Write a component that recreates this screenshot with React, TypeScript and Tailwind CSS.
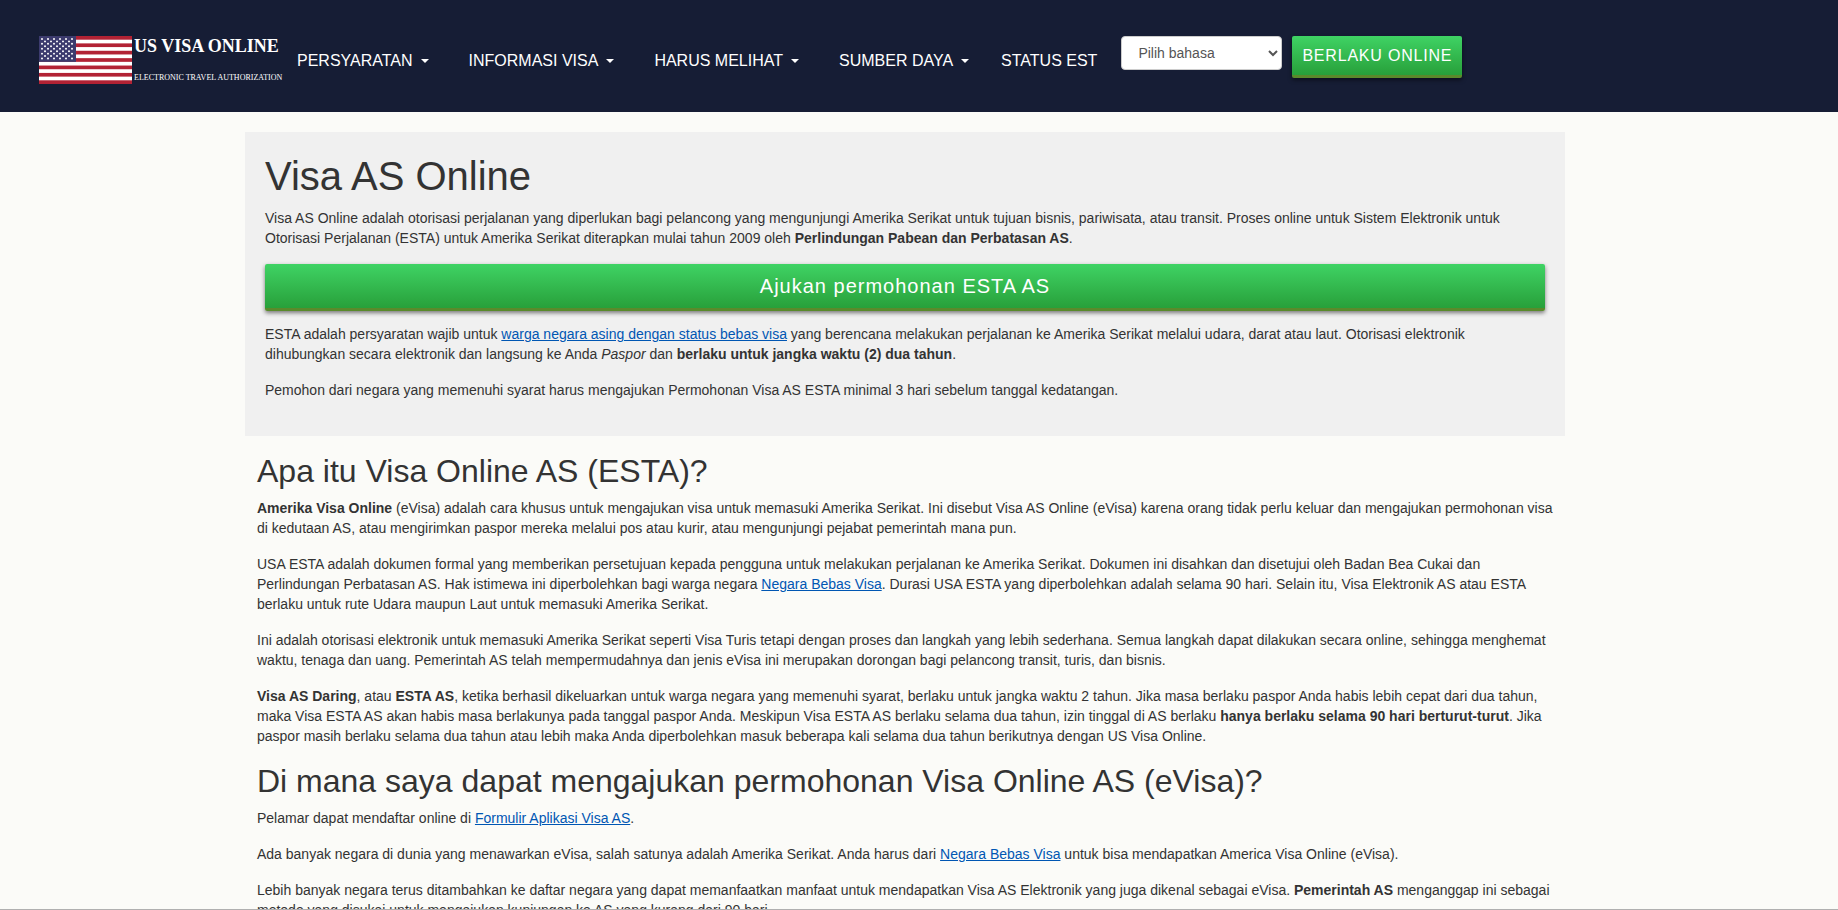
import type { ReactNode } from 'react';

const STRIPES = [0, 2, 4, 6, 8, 10, 12];

const STARS = Array.from({ length: 9 }).flatMap((_, row) =>
  Array.from({ length: row % 2 === 0 ? 6 : 5 }).map((_, col) => ({
    x: 3 + col * 6 + (row % 2 === 0 ? 0 : 3),
    y: 3 + row * 2.5,
  })),
);

const Flag = () => (
  <svg
    className="h-12 w-[93px] shrink-0"
    viewBox="0 0 93 49"
    preserveAspectRatio="none"
    aria-hidden="true"
  >
    <rect width="93" height="49" fill="#fff" />
    {STRIPES.map((i) => (
      <rect key={i} y={(i * 49) / 13} width="93" height={49 / 13} fill="#b22234" />
    ))}
    <rect width="37" height={(49 * 7) / 13} fill="#3c3b6e" />
    {STARS.map(({ x, y }) => (
      <circle key={`${x}-${y}`} cx={x} cy={y} r="1" fill="#fff" />
    ))}
  </svg>
);

const Logo = () => (
  <a href="#" className="flex w-[246px] shrink-0 items-start gap-0.5 text-white">
    <Flag />
    <span className="flex flex-col gap-4 whitespace-nowrap font-['Liberation_Serif',serif]">
      <span className="text-lg/5 font-bold">US VISA ONLINE</span>
      <span className="text-[8px]/3">ELECTRONIC TRAVEL AUTHORIZATION</span>
    </span>
  </a>
);

interface NavMenuProps {
  label: string;
}

const NavMenu = ({ label }: NavMenuProps) => (
  <button type="button" className="flex items-center gap-2 whitespace-nowrap">
    {label}
    <span className="border-x-4 border-t-4 border-x-transparent border-t-white" />
  </button>
);

const MENUS = ['PERSYARATAN', 'INFORMASI VISA', 'HARUS MELIHAT', 'SUMBER DAYA'];

const Header = () => (
  <header className="flex h-28 shrink-0 items-start bg-[#161d35] pt-9 pl-[39px]">
    <Logo />
    <nav className="mt-[13px] ml-3 flex items-center gap-8 text-base text-white">
      <div className="flex items-center gap-10">
        {MENUS.map((label) => (
          <NavMenu key={label} label={label} />
        ))}
      </div>
      <a href="#" className="whitespace-nowrap">
        STATUS EST
      </a>
    </nav>
    <select
      aria-label="Pilih bahasa"
      className="ml-6 h-[34px] w-[161px] rounded border border-[#ccc] bg-white px-3 text-sm text-[#555]"
    >
      <option>Pilih bahasa</option>
    </select>
    <a
      href="#"
      className="ml-2.5 whitespace-nowrap rounded-xs border-b-3 border-[#5a8a2b] bg-linear-to-b from-[#3fd364] to-[#28a03a] px-2.5 pt-2 pb-[7px] text-base tracking-wider text-white shadow-[0_2px_4px_rgba(0,0,0,0.5)]"
    >
      BERLAKU ONLINE
    </a>
  </header>
);

interface ChildrenProps {
  children: ReactNode;
}

const P = ({ children }: ChildrenProps) => (
  <p className="mb-4 text-sm/5">{children}</p>
);

const H2 = ({ children }: ChildrenProps) => (
  <h2 className="mb-2 text-[32px]/[38px]">{children}</h2>
);

const TextLink = ({ children }: ChildrenProps) => (
  <a href="#" className="text-[#0056b3] underline">
    {children}
  </a>
);

const Hero = () => (
  <section className="bg-[#f0f0f0] p-5">
    <h1 className="mb-2 text-[40px]/12">Visa AS Online</h1>
    <P>
      Visa AS Online adalah otorisasi perjalanan yang diperlukan bagi pelancong
      yang mengunjungi Amerika Serikat untuk tujuan bisnis, pariwisata, atau
      transit. Proses online untuk Sistem Elektronik untuk Otorisasi Perjalanan
      (ESTA) untuk Amerika Serikat diterapkan mulai tahun 2009 oleh{' '}
      <b>Perlindungan Pabean dan Perbatasan AS</b>.
    </P>
    <a
      href="#"
      className="mb-[13px] block rounded-xs border-b-3 border-[#5a8a2b] bg-linear-to-b from-[#3fd364] to-[#28a03a] pt-2 pb-2 text-center text-xl tracking-wider text-white shadow-[0_2px_4px_rgba(0,0,0,0.5)]"
    >
      Ajukan permohonan ESTA AS
    </a>
    <P>
      ESTA adalah persyaratan wajib untuk{' '}
      <TextLink>warga negara asing dengan status bebas visa</TextLink> yang
      berencana melakukan perjalanan ke Amerika Serikat melalui udara, darat
      atau laut. Otorisasi elektronik dihubungkan secara elektronik dan langsung
      ke Anda <i>Paspor</i> dan <b>berlaku untuk jangka waktu (2) dua tahun</b>.
    </P>
    <P>
      Pemohon dari negara yang memenuhi syarat harus mengajukan Permohonan Visa
      AS ESTA minimal 3 hari sebelum tanggal kedatangan.
    </P>
  </section>
);

export default function App() {
  return (
    <div className="flex h-screen flex-col overflow-hidden border-b border-[#b0b0b0] bg-[#fbfbf8] font-['Liberation_Sans',Arial,sans-serif] text-[#333]">
      <Header />
      <div className="min-h-0 flex-1 overflow-hidden pt-5 pr-7">
        <main className="mx-auto max-w-[1320px]">
          <Hero />
          <div className="px-3 pt-4">
            <H2>Apa itu Visa Online AS (ESTA)?</H2>
            <P>
              <b>Amerika Visa Online</b> (eVisa) adalah cara khusus untuk
              mengajukan visa untuk memasuki Amerika Serikat. Ini disebut Visa
              AS Online (eVisa) karena orang tidak perlu keluar dan mengajukan
              permohonan visa di kedutaan AS, atau mengirimkan paspor mereka
              melalui pos atau kurir, atau mengunjungi pejabat pemerintah mana
              pun.
            </P>
            <P>
              USA ESTA adalah dokumen formal yang memberikan persetujuan kepada
              pengguna untuk melakukan perjalanan ke Amerika Serikat. Dokumen
              ini disahkan dan disetujui oleh Badan Bea Cukai dan Perlindungan
              Perbatasan AS. Hak istimewa ini diperbolehkan bagi warga negara{' '}
              <TextLink>Negara Bebas Visa</TextLink>. Durasi USA ESTA yang
              diperbolehkan adalah selama 90 hari. Selain itu, Visa Elektronik
              AS atau ESTA berlaku untuk rute Udara maupun Laut untuk memasuki
              Amerika Serikat.
            </P>
            <P>
              Ini adalah otorisasi elektronik untuk memasuki Amerika Serikat
              seperti Visa Turis tetapi dengan proses dan langkah yang lebih
              sederhana. Semua langkah dapat dilakukan secara online, sehingga
              menghemat waktu, tenaga dan uang. Pemerintah AS telah
              mempermudahnya dan jenis eVisa ini merupakan dorongan bagi
              pelancong transit, turis, dan bisnis.
            </P>
            <P>
              <b>Visa AS Daring</b>, atau <b>ESTA AS</b>, ketika berhasil
              dikeluarkan untuk warga negara yang memenuhi syarat, berlaku untuk
              jangka waktu 2 tahun. Jika masa berlaku paspor Anda habis lebih
              cepat dari dua tahun, maka Visa ESTA AS akan habis masa berlakunya
              pada tanggal paspor Anda. Meskipun Visa ESTA AS berlaku selama dua
              tahun, izin tinggal di AS berlaku{' '}
              <b>hanya berlaku selama 90 hari berturut-turut</b>. Jika paspor
              masih berlaku selama dua tahun atau lebih maka Anda diperbolehkan
              masuk beberapa kali selama dua tahun berikutnya dengan US Visa
              Online.
            </P>
            <H2>Di mana saya dapat mengajukan permohonan Visa Online AS (eVisa)?</H2>
            <P>
              Pelamar dapat mendaftar online di{' '}
              <TextLink>Formulir Aplikasi Visa AS</TextLink>.
            </P>
            <P>
              Ada banyak negara di dunia yang menawarkan eVisa, salah satunya
              adalah Amerika Serikat. Anda harus dari{' '}
              <TextLink>Negara Bebas Visa</TextLink> untuk bisa mendapatkan
              America Visa Online (eVisa).
            </P>
            <P>
              Lebih banyak negara terus ditambahkan ke daftar negara yang dapat
              memanfaatkan manfaat untuk mendapatkan Visa AS Elektronik yang
              juga dikenal sebagai eVisa. <b>Pemerintah AS</b> menganggap ini
              sebagai metode yang disukai untuk mengajukan kunjungan ke AS yang
              kurang dari 90 hari.
            </P>
          </div>
        </main>
      </div>
    </div>
  );
}
